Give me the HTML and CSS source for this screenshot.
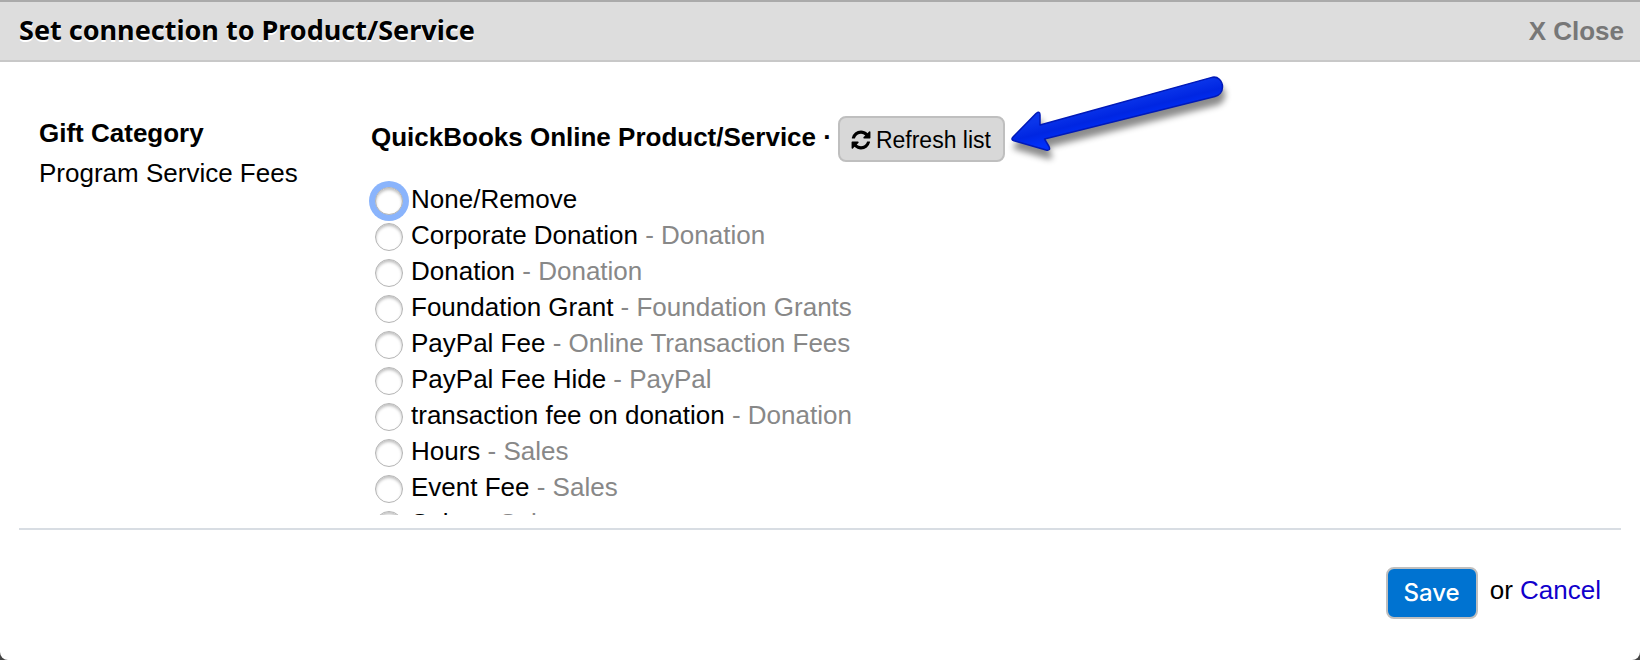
FILE: index.html
```html
<!DOCTYPE html>
<html lang="en">

<head>
    <meta charset="UTF-8">
    <meta name="viewport" content="width=device-width, initial-scale=1.0">
    <title>Set connection to Product/Service</title>
    <link rel="stylesheet" href="styles.css">
</head>

<body>

    <div class="dialog">
        <header class="dialog-head">
            <h1>Set connection to Product/Service</h1>
            <button type="button" class="close">X Close</button>
        </header>

        <form class="dialog-form">
            <div class="columns">
                <div class="category">
                    <h2>Gift Category</h2>
                    <p>Program Service Fees</p>
                </div>

                <div class="products">
                    <div class="products-head">
                        <h2>QuickBooks Online Product/Service ·</h2>
                        <div class="refresh-wrap">
                            <button type="button" class="refresh">
                                <svg width="22" height="22" viewBox="0 0 1792 1792" aria-hidden="true"><path d="M1639 1056q0 5-1 7-64 268-268 434.5t-478 166.5q-146 0-282.5-55t-243.5-157l-129 129q-19 19-45 19t-45-19-19-45v-448q0-26 19-45t45-19h448q26 0 45 19t19 45-19 45l-137 137q71 66 161 102t187 36q134 0 250-65t186-179q11-17 53-117 8-23 30-23h192q13 0 22.5 9.5t9.5 22.5zm25-800v448q0 26-19 45t-45 19h-448q-26 0-45-19t-19-45 19-45l138-138q-148-137-349-137-134 0-250 65t-186 179q-11 17-53 117-8 23-30 23h-199q-13 0-22.5-9.5t-9.5-22.5v-7q65-268 270-434.5t480-166.5q146 0 284 55.5t245 156.5l130-129q19-19 45-19t45 19 19 45z"/></svg>
                                Refresh list
                            </button>
                            <svg class="arrow" width="230" height="100" viewBox="0 0 230 100" aria-hidden="true">
                                <defs>
                                    <linearGradient id="arrowFill" gradientUnits="userSpaceOnUse" x1="118" y1="30" x2="124" y2="54">
                                        <stop offset="0" stop-color="#0a35ea"/>
                                        <stop offset="0.5" stop-color="#0026e2"/>
                                        <stop offset="1" stop-color="#0030fa"/>
                                    </linearGradient>
                                </defs>
                                <path d="M8 67 L31 43.5 Q35 40.500 35 45 L35 55 L206 7.600 C213 5.500 217.500 11 217.500 17 C217.500 22 214 25.500 210 26.500 L39.500 69 L44 76.500 Q46 81 41 80 L9 70.800 Q5.500 69.500 8 67 Z" fill="url(#arrowFill)" stroke="#0019b8" stroke-width="1.500" stroke-linejoin="round"/>
                            </svg>
                        </div>
                    </div>

                    <div class="list">
                        <label><input type="radio" name="product" autofocus><span>None/Remove</span></label>
                        <label><input type="radio" name="product"><span>Corporate Donation <small>- Donation</small></span></label>
                        <label><input type="radio" name="product"><span>Donation <small>- Donation</small></span></label>
                        <label><input type="radio" name="product"><span>Foundation Grant <small>- Foundation Grants</small></span></label>
                        <label><input type="radio" name="product"><span>PayPal Fee <small>- Online Transaction Fees</small></span></label>
                        <label><input type="radio" name="product"><span>PayPal Fee Hide <small>- PayPal</small></span></label>
                        <label><input type="radio" name="product"><span>transaction fee on donation <small>- Donation</small></span></label>
                        <label><input type="radio" name="product"><span>Hours <small>- Sales</small></span></label>
                        <label><input type="radio" name="product"><span>Event Fee <small>- Sales</small></span></label>
                        <label><input type="radio" name="product"><span>Sales <small>- Sales</small></span></label>
                    </div>
                </div>
            </div>

            <footer class="actions">
                <button type="submit" class="save">Save</button>
                <p>or <a href="#">Cancel</a></p>
            </footer>
        </form>
    </div>

</body>

</html>
```
FILE: styles.css
```css
* {
    box-sizing: border-box;
}

body {
    margin: 0;
    background: #444;
    color: #000;
    font-family: "Liberation Sans", Arial, sans-serif;
    font-size: 26px;
    line-height: 36px;
}

h1, h2, p {
    margin: 0;
    font-size: 26px;
}

button {
    font-family: inherit;
    cursor: pointer;
}

.dialog {
    min-height: 100vh;
    background: #fff;
    border-radius: 0 0 8px 8px;
}

.dialog-head {
    display: flex;
    justify-content: space-between;
    align-items: center;
    height: 62px;
    padding: 0 16px 0 19px;
    background: #ddd;
    border-top: 2px solid #aaa;
    border-bottom: 2px solid #c8c8c8;
}

.dialog-head h1 {
    padding-bottom: 2px;
    font-family: "Noto Sans", "Open Sans", sans-serif;
    font-size: 27px;
    font-weight: bold;
    text-shadow: 0 2px 0 #fff;
}

.close {
    padding: 0;
    border: none;
    background: none;
    color: #777;
    font-size: 26px;
    font-weight: bold;
}

.columns {
    display: grid;
    grid-template-columns: 332px 1fr;
    padding: 51px 39px 13px;
}

.category {
    line-height: 40px;
}

.products {
    padding-top: 3px;
}

.products-head {
    display: flex;
    align-items: center;
    gap: 6px;
    margin-bottom: 19px;
}

.products-head h2 {
    padding-bottom: 5px;
}

.refresh-wrap {
    position: relative;
}

.refresh {
    display: flex;
    align-items: center;
    gap: 4px;
    height: 46px;
    padding: 2px 12px 0 10px;
    border: 2px solid #bfbfbf;
    border-radius: 8px;
    background: #d8d8d8;
    color: #000;
    font-size: 23px;
}

/* sits over the page, pointing at the refresh button */
.arrow {
    position: absolute;
    left: 100%;
    bottom: -8px;
    filter: drop-shadow(2px 8px 3px rgba(0, 0, 0, 0.45));
    pointer-events: none;
}

/* left padding leaves room for the focus ring */
.list {
    height: 334px;
    margin-left: -4px;
    padding-left: 8px;
    overflow-y: auto;
    scrollbar-width: none;
}

.list label {
    display: flex;
    gap: 8px;
    height: 36px;
}

.list input {
    appearance: none;
    width: 28px;
    height: 28px;
    margin: 6px 0 0;
    border: 1px solid #b5b5b5;
    border-radius: 50%;
    background: #fff;
    box-shadow: inset 0 2px 3px rgba(0, 0, 0, 0.25);
}

.list input:focus {
    outline: none;
    box-shadow: 0 0 0 6px #8ab4fc, inset 0 2px 3px rgba(0, 0, 0, 0.25);
}

.list small {
    color: #888;
    font-size: 26px;
}

.actions {
    display: flex;
    justify-content: flex-end;
    gap: 12px;
    margin: 0 19px;
    padding: 37px 20px 40px;
    border-top: 2px solid #d8dde3;
}

.save {
    height: 52px;
    padding: 0 16px 2px;
    border: 2px solid #bfbfbf;
    border-radius: 8px;
    background: #0073d1;
    color: #fff;
    font-family: Inter, sans-serif;
    font-size: 24px;
    font-weight: 500;
}

.actions p {
    padding-top: 5px;
}

.actions a {
    color: #10c;
    text-decoration: none;
}
```
